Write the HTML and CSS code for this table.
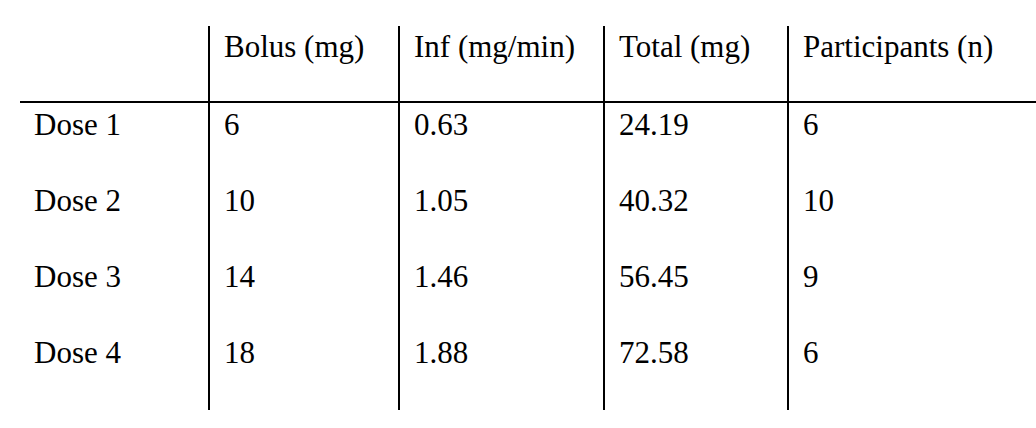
FILE: index.html
```html
<!DOCTYPE html>
<html lang="en">
<head>
<meta charset="utf-8">
<title>Dose table</title>
<link rel="stylesheet" href="styles.css">
</head>
<body>
<table class="dose-table">
  <colgroup>
    <col class="c1"><col class="c2"><col class="c3"><col class="c4"><col class="c5">
  </colgroup>
  <thead>
    <tr>
      <th></th>
      <th>Bolus (mg)</th>
      <th>Inf (mg/min)</th>
      <th>Total (mg)</th>
      <th>Participants (n)</th>
    </tr>
  </thead>
  <tbody>
    <tr><td>Dose 1</td><td>6</td><td>0.63</td><td>24.19</td><td>6</td></tr>
    <tr><td>Dose 2</td><td>10</td><td>1.05</td><td>40.32</td><td>10</td></tr>
    <tr><td>Dose 3</td><td>14</td><td>1.46</td><td>56.45</td><td>9</td></tr>
    <tr class="last"><td>Dose 4</td><td>18</td><td>1.88</td><td>72.58</td><td>6</td></tr>
  </tbody>
</table>
</body>
</html>
```

FILE: styles.css
```css
html, body {
  margin: 0;
  padding: 0;
  background: #ffffff;
}

body {
  padding: 26px 0 0 20px;
  font-family: "Liberation Serif", "Times New Roman", serif;
  font-size: 31px;
  line-height: 36px;
  color: #000000;
}

.dose-table {
  border-collapse: separate;
  border-spacing: 0;
  table-layout: fixed;
  width: 1016px;
}

.c1 { width: 188px; }
.c2 { width: 190px; }
.c3 { width: 205px; }
.c4 { width: 184px; }
.c5 { width: 249px; }

.dose-table th,
.dose-table td {
  text-align: left;
  font-weight: normal;
  vertical-align: top;
  padding: 4px 0 36px 14px;
  white-space: nowrap;
}

.dose-table th + th,
.dose-table td + td {
  border-left: 2px solid #000000;
  padding-left: 14px;
}

.dose-table th {
  padding-top: 3px;
  padding-bottom: 36px;
  border-bottom: 2px solid #000000;
}

.dose-table tr.last td {
  padding-bottom: 39px;
}
```
